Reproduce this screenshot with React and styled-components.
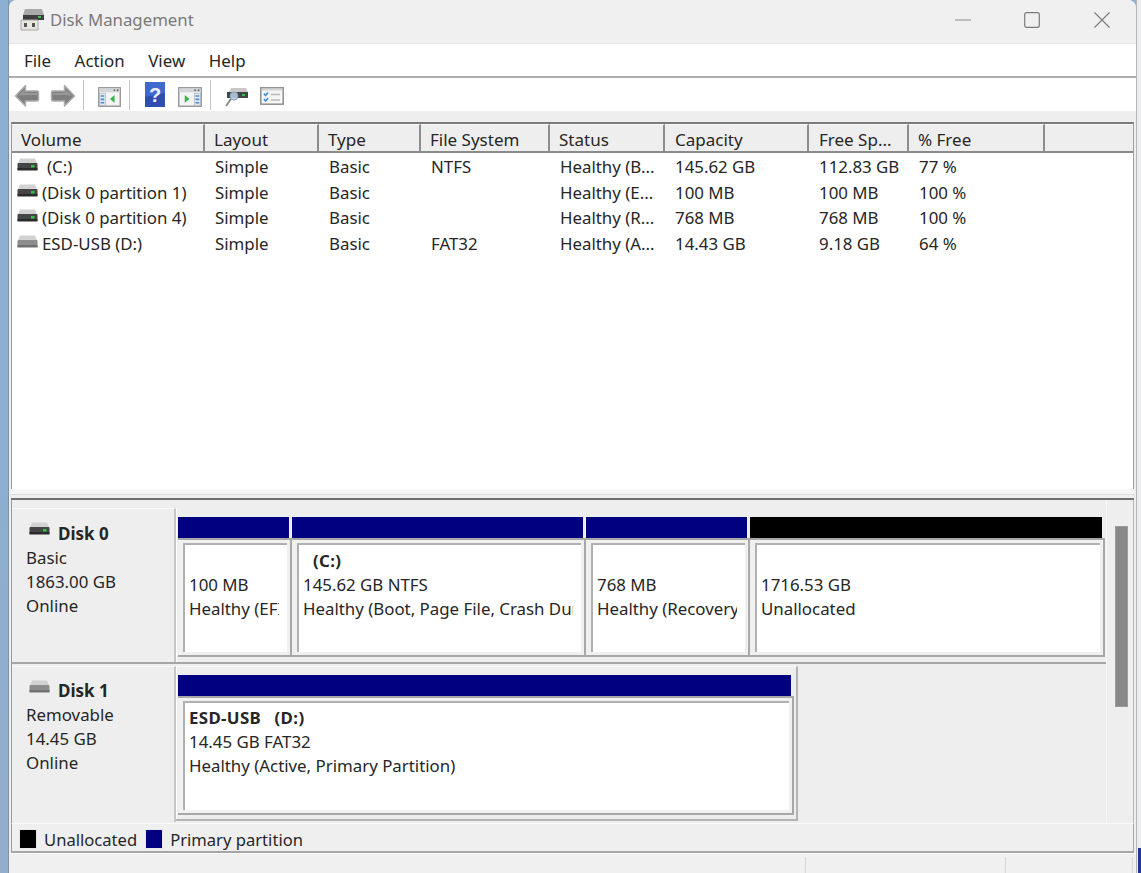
import React from "react";
import styled, { createGlobalStyle } from "styled-components";

const Global = createGlobalStyle`
  html, body { margin: 0; padding: 0; height: 100%; overflow: hidden; }
  body { background: #eef0f2; font-family: "Noto Sans", "Liberation Sans", sans-serif; font-size: 16.85px; color: #262626; }
  * { box-sizing: border-box; }
`;

const Desktop = styled.div`
  display: flex; width: 1141px; height: 873px; overflow: hidden;
  background: #8db0d2;
`;
const LeftEdge = styled.div`
  width: 9px; flex: none;
  background: linear-gradient(180deg, #8db0d2 0%, #8eaed0 60%, #93aecb 100%);
  border-right: 1px solid #7d93ab;
`;
const RightEdge = styled.div`
  width: 5px; flex: none; display: flex; flex-direction: column; justify-content: flex-end;
  background: #eceef0;
  border-left: 1px solid #b5b5b5;
`;
const DesktopPeek = styled.div`
  height: 25px; background: #1c3a8f; margin-left: 1px;
`;
const Window = styled.div`
  flex: none; width: 1127px; height: 873px; display: flex; flex-direction: column;
  background: #eeeeee; border-top-left-radius: 8px; border-top-right-radius: 8px; overflow: hidden;
`;
const TitleBar = styled.div`
  height: 44px; flex: none; display: flex; align-items: center; background: #f0f0f0;
  border-bottom: 1px solid #e6e6e6; padding: 0 0 4px 11px;
`;
const TitleText = styled.span`
  margin-left: 4px; color: #7a7a7a; font-size: 16.8px;
`;
const WinButtons = styled.div`
  margin-left: auto; margin-right: -1px; display: flex; align-items: center;
`;
const WinButton = styled.div`
  width: 70px; height: 40px; display: flex; align-items: center; justify-content: center;
`;
const MenuBar = styled.div`
  height: 34px; flex: none; display: flex; align-items: center; background: #fff;
  border-bottom: 2px solid #aeaeae; padding: 0 0 0 15px; gap: 23.6px;
  font-size: 16.9px;
`;
const Toolbar = styled.div`
  height: 33px; flex: none; display: flex; align-items: center; background: #fff; padding-left: 5px;
`;
const ToolIcon = styled.svg`
  flex: none; margin-left: ${p => p.$ml || 0}px; margin-top: ${p => p.$mt || 0}px; display: block;
`;
const ToolSep = styled.div`
  width: 1px; height: 30px; flex: none; background: #c4c4c4; margin-left: ${p => p.$ml}px;
`;
const ListPane = styled.div`
  height: 367px; flex: none; margin: 11px 2px 0 2px; background: #fff;
  border-top: 2px solid #7c7c7c; border-left: 1px solid #9a9a9a; border-right: 1px solid #a0a0a0;
  display: flex; flex-direction: column;
`;
const gridCols = "193px 114px 102px 129px 115px 144px 100px 136px 1fr";
const HeaderRow = styled.div`
  display: grid; grid-template-columns: ${gridCols}; height: 29px; flex: none;
  background: #eeeeee; border-bottom: 2px solid #8a8a8a;
`;
const HeaderCell = styled.div`
  padding: 2px 0 0 ${p => p.$pl ?? 9}px; border-right: 2px solid #8d8d8d; border-top: 1px solid #fafafa;
  line-height: 25px; white-space: nowrap; overflow: hidden; font-size: 17px;
  &:last-child { border-right: none; }
`;
const Rows = styled.div`
  padding-top: 1px;
`;
const Row = styled.div`
  display: grid; grid-template-columns: ${gridCols}; height: 25.5px; align-items: center;
`;
const Cell = styled.div`
  padding-left: ${p => p.$pl ?? 10}px; white-space: nowrap; overflow: hidden;
`;
const VolumeCell = styled.div`
  display: flex; align-items: center; padding-left: 5px; white-space: nowrap;
`;
const VolumeName = styled.span`
  margin-left: ${p => p.$ml}px;
`;
const GlyphSvg = styled.svg`
  flex: none; margin-bottom: ${p => p.$up}px;
`;
const Splitter = styled.div`
  height: 11px; flex: none; margin: 0 2px 0 2px;
  background: #efefef; border-top: 5px solid #f6f6f6; border-bottom: 2px solid #707070;
  box-shadow: inset 0 1px 0 #dcdcdc;
`;
const DiskArea = styled.div`
  flex: 1; min-height: 0; display: flex; margin-left: 2px; margin-right: 2px;
  background: #eeeeee; border-left: 1px solid #9a9a9a; border-right: 1px solid #b8b8b8;
`;
const DiskRows = styled.div`
  width: 1095px; flex: none; padding-top: 8px; border-right: 1px solid #f8f8f8;
`;
const DiskRow = styled.div`
  display: flex; height: ${p => p.$h}px; border-bottom: ${p => (p.$line ? "2px solid #a6a6a6" : "none")};
  margin-bottom: ${p => (p.$line ? "2px" : "0")};
`;
const DiskInfo = styled.div`
  width: 164px; flex: none; padding: ${p => p.$pt}px 0 0 14px; line-height: 24px;
  border-top: 1px solid #fafafa; border-right: 2px solid #c6c6c6; box-shadow: 1px 0 0 #fff;
`;
const DiskName = styled.div`
  display: flex; align-items: center; font-weight: 700; gap: 8px; height: 24px; margin-left: 3px;
  font-size: 17px;
`;
const Partitions = styled.div`
  display: flex; flex: 1; padding: 9px 0 0 2px;
`;
const Partition = styled.div`
  width: ${p => p.$w}px; flex: none; height: ${p => p.$h || 140}px; display: flex; flex-direction: column;
`;
const Bar = styled.div`
  height: 21px; flex: none; margin-right: 3px; background: ${p => p.$color};
`;
const Frame = styled.div`
  flex: 1; padding: 3px 3px 3px 5px; border-top: 2px solid #a8a8a8; border-right: 2px solid #a8a8a8;
  border-bottom: 2px solid #a8a8a8; background: #f0f0f0; display: flex; min-height: 0;
`;
const Inner = styled.div`
  flex: 1; min-width: 0; background: #fff; border-top: 2px solid #b0b0b0; border-left: 2px solid #b0b0b0;
  padding: ${p => p.$pt ?? 4}px 8px 0 4px; line-height: 24px;
`;
const Clip = styled.div`
  overflow: hidden; white-space: nowrap;
`;
const PartName = styled.div`
  font-weight: 700; height: 24px; white-space: pre; padding-left: ${p => p.$pl || 0}px;
  letter-spacing: 0.35px; word-spacing: 2px;
`;
const UsbOuter = styled.div`
  width: 622px; height: 155px; flex: none; padding: 8px 5px 0 2px;
  border-right: 2px solid #b4b4b4; border-bottom: 2px solid #b4b4b4; border-top: 1px solid #fafafa;
`;
const ScrollTrack = styled.div`
  flex: 1; padding: 26px 5px 0 8px;
`;
const ScrollThumb = styled.div`
  height: 181px; background: #888888; border: 1px solid #9a9a9a;
`;
const Legend = styled.div`
  height: 30px; flex: none; margin: 0 2px; display: flex; align-items: center; padding: 3px 0 0 7px;
  background: #efefef; border-top: 1px solid #fafafa; border-bottom: 2px solid #a6a6a6; border-right: 1px solid #a6a6a6;
  border-left: 1px solid #9a9a9a; font-size: 16.6px;
`;
const Swatch = styled.div`
  width: 18px; height: 20px; flex: none; background: ${p => p.$color}; border: 1px solid #e9e9e9;
  margin-right: 7px;
`;
const LegendLabel = styled.span`
  margin-right: 8px;
`;
const StatusBar = styled.div`
  height: 20px; flex: none; display: grid; grid-template-columns: 797px 200px 127px 1fr;
  background: #f0f0f0; border-top: 1px solid #fbfbfb;
`;
const StatusCell = styled.div`
  border-right: 1px solid #d6d6d6; margin-top: 3px;
`;

const DiskGlyph = ({ dark = true, up = 4 }) => (
  <GlyphSvg $up={up} width="21" height="13" viewBox="0 0 21 13">
    <path d="M3 0.5h15l2 5H1z" fill="#d2d2d2" />
    <rect x="0.5" y="5" width="20" height="7" rx="1" fill={dark ? "#454545" : "#8c8c8c"} />
    <rect x="0.5" y="10" width="20" height="2.5" fill={dark ? "#2a2a2a" : "#707070"} />
    {dark && <rect x="14" y="7" width="3.5" height="2.5" fill="#35c24a" />}
  </GlyphSvg>
);

const AppIcon = () => (
  <svg width="26" height="24" viewBox="0 0 26 24" style={{ flex: "none" }}>
    <path d="M5 1h17l2 6H3z" fill="#a9a9a9" />
    <rect x="3" y="7" width="21" height="5" fill="#3d3d3d" />
    <rect x="18" y="8" width="3" height="2" fill="#3ecb55" />
    <path d="M1 12h17v10H1z" fill="#e9e6df" stroke="#a8a8a8" />
    <rect x="4" y="15" width="3" height="4" fill="#555" />
    <rect x="12" y="15" width="3" height="4" fill="#555" />
  </svg>
);

const ArrowL = ({ flip, ml }) => (
  <ToolIcon $ml={ml} $mt={3} width="26" height="24" viewBox="0 0 26 24">
    <g transform={flip ? "translate(26 0) scale(-1 1)" : undefined}>
      <path d="M11.5 1.5 1.5 12l10 10v-5H23a1.5 1.5 0 0 0 1.5-1.5v-7A1.5 1.5 0 0 0 23 7H11.5z" fill="#7f7f7f" stroke="#adadad" strokeWidth="1.5" strokeLinejoin="round" />
      <path d="M4 12 10.5 5.5V9H23v2H9z" fill="#989898" />
    </g>
  </ToolIcon>
);

const PaneIcon = ({ ml, right, w = 24 }) => (
  <ToolIcon $ml={ml} $mt={5} width={w} height="20" viewBox="0 0 25 21" preserveAspectRatio="none">
    <rect x="0.8" y="0.8" width="23.4" height="19.4" fill="#f4f4f4" stroke="#979797" strokeWidth="1.5" />
    <rect x="1.5" y="1.5" width="22" height="4" fill="#d3d6d9" />
    <rect x="17" y="2.5" width="1.8" height="1.8" fill="#6b6b6b" /><rect x="20.5" y="2.5" width="1.8" height="1.8" fill="#6b6b6b" />
    {right ? (
      <>
        <rect x="17" y="6.5" width="6.5" height="13" fill="#dfe9f3" stroke="#a0a8b0" strokeWidth=".6" />
        <path d="M18.2 9.5h4M18.2 13h4M18.2 16.5h4" stroke="#4f8fd0" strokeWidth="1.6" />
        <path d="M7 8.5v8l5-4z" fill="#35b54b" />
      </>
    ) : (
      <>
        <rect x="1.5" y="6.5" width="6.5" height="13" fill="#dfe9f3" stroke="#a0a8b0" strokeWidth=".6" />
        <path d="M2.8 9.5h4M2.8 13h4M2.8 16.5h4" stroke="#4f8fd0" strokeWidth="1.6" />
        <path d="M18 8.5v8l-5-4z" fill="#35b54b" />
      </>
    )}
  </ToolIcon>
);

const HelpIcon = ({ ml }) => (
  <ToolIcon $ml={ml} width="20" height="25" viewBox="0 0 20 25">
    <rect width="20" height="25" fill="#2d4fae" />
    <path d="M0 0h20v11L0 15z" fill="#4169cb" />
    <text x="10" y="19.5" textAnchor="middle" fontFamily="Liberation Sans" fontWeight="700" fontSize="20" fill="#e8eefb">?</text>
  </ToolIcon>
);

const SearchDiskIcon = ({ ml }) => (
  <ToolIcon $ml={ml} $mt={4} width="24" height="20" viewBox="0 0 24 20">
    <path d="M6 1h15l2 4H4z" fill="#c9c9c9" />
    <rect x="2" y="5" width="21" height="6" fill="#454545" />
    <rect x="17" y="7" width="3" height="2" fill="#35c24a" />
    <circle cx="9" cy="9" r="4" fill="#b8d2ea" fillOpacity=".85" stroke="#8aa0b5" />
    <path d="M6 12 1 19" stroke="#8c8c8c" strokeWidth="2" />
  </ToolIcon>
);

const CheckIcon = ({ ml }) => (
  <ToolIcon $ml={ml} $mt={2} width="24" height="18" viewBox="0 0 24 18">
    <rect x="0.8" y="0.8" width="22.4" height="16.4" fill="#f6f6f6" stroke="#8e8e8e" strokeWidth="1.5" />
    <rect x="1.5" y="1.5" width="21" height="2" fill="#cfd3d6" />
    <path d="M4 6.5l1.5 2L8 5.5M4 12l1.5 2L8 11" stroke="#3d8ee0" strokeWidth="1.5" fill="none" />
    <path d="M11 7.5h9M11 13h9" stroke="#b9b9b9" strokeWidth="1.3" />
  </ToolIcon>
);

const headers = [
  { t: "Volume", pl: 9 }, { t: "Layout", pl: 9 }, { t: "Type", pl: 9 }, { t: "File System", pl: 9 },
  { t: "Status", pl: 9 }, { t: "Capacity", pl: 10 }, { t: "Free Sp...", pl: 10 }, { t: "% Free", pl: 9 }, { t: "", pl: 0 },
];
const volumes = [
  { name: "(C:)", ml: 9, cells: ["Simple", "Basic", "NTFS", "Healthy (B...", "145.62 GB", "112.83 GB", "77 %"] },
  { name: "(Disk 0 partition 1)", ml: 4, cells: ["Simple", "Basic", "", "Healthy (E...", "100 MB", "100 MB", "100 %"] },
  { name: "(Disk 0 partition 4)", ml: 4, cells: ["Simple", "Basic", "", "Healthy (R...", "768 MB", "768 MB", "100 %"] },
  { name: "ESD-USB (D:)", ml: 4, light: true, cells: ["Simple", "Basic", "FAT32", "Healthy (A...", "14.43 GB", "9.18 GB", "64 %"] },
];
const disk0 = [
  { w: 114, color: "#000080", lines: ["100 MB", "Healthy (EFI System Partition)"] },
  { w: 294, color: "#000080", name: "(C:)", pl: 10, lines: ["145.62 GB NTFS", "Healthy (Boot, Page File, Crash Dump, Primary Partition)"] },
  { w: 164, color: "#000080", lines: ["768 MB", "Healthy (Recovery Partition)"] },
  { w: 355, color: "#000000", lines: ["1716.53 GB", "Unallocated"] },
];

const PartBody = ({ name, pl, lines, pt }) => (
  <Inner $pt={pt}>
    <Clip>
      <PartName $pl={pl}>{name || " "}</PartName>
      {lines.map(l => <div key={l}>{l}</div>)}
    </Clip>
  </Inner>
);

export default function App() {
  return (
    <Desktop>
      <Global />
      <LeftEdge />
      <Window>
        <TitleBar>
          <AppIcon />
          <TitleText>Disk Management</TitleText>
          <WinButtons>
            <WinButton>
              <svg width="16" height="2" viewBox="0 0 16 2" style={{ marginLeft: 2 }}><path d="M0 1h16" stroke="#8a8a8a" /></svg>
            </WinButton>
            <WinButton>
              <svg width="16" height="16" viewBox="0 0 16 16"><rect x=".7" y=".7" width="14.6" height="14.6" rx="2" fill="none" stroke="#7a7a7a" strokeWidth="1.2" /></svg>
            </WinButton>
            <WinButton>
              <svg width="16" height="16" viewBox="0 0 16 16"><path d="M.5.5l15 15M15.5.5l-15 15" stroke="#7a7a7a" strokeWidth="1.1" /></svg>
            </WinButton>
          </WinButtons>
        </TitleBar>
        <MenuBar>
          <span>File</span><span>Action</span><span>View</span><span>Help</span>
        </MenuBar>
        <Toolbar>
          <ArrowL />
          <ArrowL flip ml={10} />
          <ToolSep $ml={7} />
          <PaneIcon ml={14} w={23} />
          <ToolSep $ml={8} />
          <HelpIcon ml={15} />
          <PaneIcon right ml={13} />
          <ToolSep $ml={8} />
          <SearchDiskIcon ml={14} />
          <CheckIcon ml={11} />
        </Toolbar>
        <ListPane>
          <HeaderRow>
            {headers.map((h, i) => <HeaderCell key={i} $pl={h.pl}>{h.t}</HeaderCell>)}
          </HeaderRow>
          <Rows>
            {volumes.map(v => (
              <Row key={v.name}>
                <VolumeCell><DiskGlyph dark={!v.light} /><VolumeName $ml={v.ml}>{v.name}</VolumeName></VolumeCell>
                {v.cells.map((c, i) => <Cell key={i}>{c}</Cell>)}
                <Cell />
              </Row>
            ))}
          </Rows>
        </ListPane>
        <Splitter />
        <DiskArea>
          <DiskRows>
            <DiskRow $h={156} $line>
              <DiskInfo $pt={13}>
                <DiskName><DiskGlyph up={12} />Disk 0</DiskName>
                <div>Basic</div><div>1863.00 GB</div><div>Online</div>
              </DiskInfo>
              <Partitions>
                {disk0.map(p => (
                  <Partition key={p.lines[0]} $w={p.w}>
                    <Bar $color={p.color} />
                    <Frame><PartBody name={p.name} pl={p.pl} lines={p.lines} /></Frame>
                  </Partition>
                ))}
              </Partitions>
            </DiskRow>
            <DiskRow $h={156}>
              <DiskInfo $pt={12}>
                <DiskName><DiskGlyph up={10} dark={false} />Disk 1</DiskName>
                <div>Removable</div><div>14.45 GB</div><div>Online</div>
              </DiskInfo>
              <UsbOuter>
                <Partition $w={616} $h={140}>
                  <Bar $color="#000080" />
                  <Frame><PartBody pt={3} name="ESD-USB  (D:)" lines={["14.45 GB FAT32", "Healthy (Active, Primary Partition)"]} /></Frame>
                </Partition>
              </UsbOuter>
            </DiskRow>
          </DiskRows>
          <ScrollTrack><ScrollThumb /></ScrollTrack>
        </DiskArea>
        <Legend>
          <Swatch $color="#000" /><LegendLabel>Unallocated</LegendLabel>
          <Swatch $color="#000080" /><LegendLabel>Primary partition</LegendLabel>
        </Legend>
        <StatusBar>
          <StatusCell /><StatusCell /><StatusCell /><div />
        </StatusBar>
      </Window>
      <RightEdge><DesktopPeek /></RightEdge>
    </Desktop>
  );
}
